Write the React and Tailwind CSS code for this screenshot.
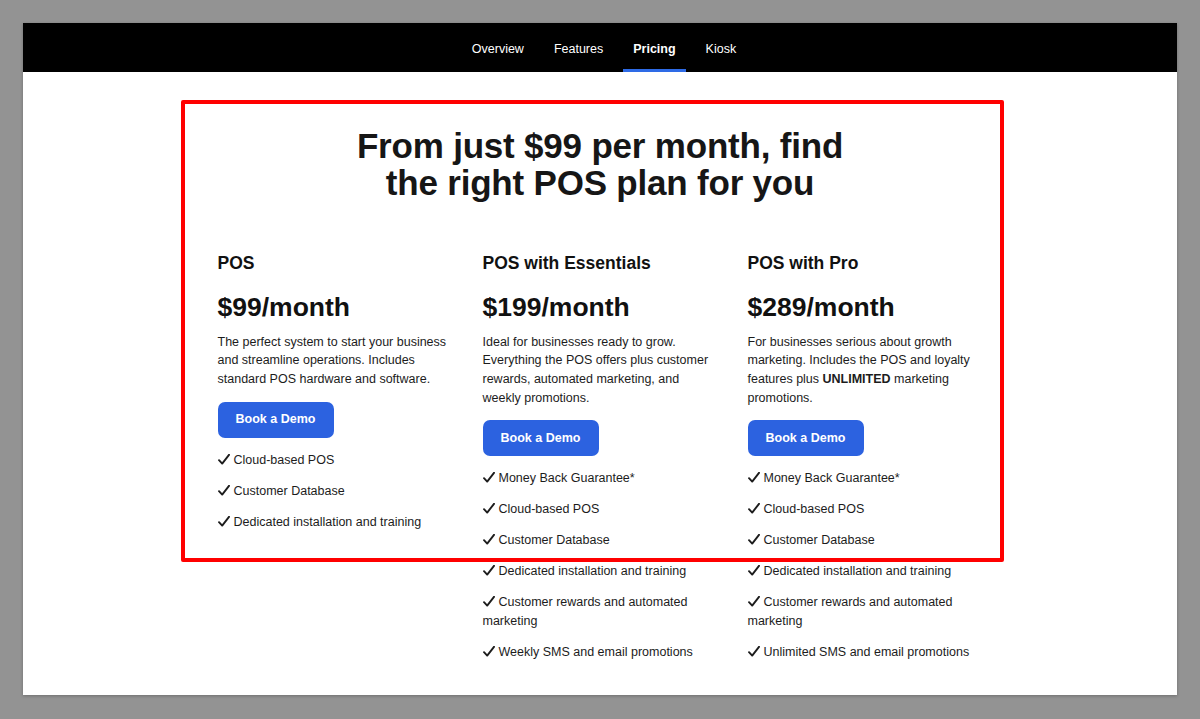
const navItems = [
  { label: "Overview" },
  { label: "Features" },
  { label: "Pricing", active: true },
  { label: "Kiosk" },
];

const plans = [
  {
    name: "POS",
    price: "$99/month",
    description: (
      <>
        The perfect system to start your business and streamline operations.
        Includes standard POS hardware and software.
      </>
    ),
    features: [
      "Cloud-based POS",
      "Customer Database",
      "Dedicated installation and training",
    ],
  },
  {
    name: "POS with Essentials",
    price: "$199/month",
    description: (
      <>
        Ideal for businesses ready to grow. Everything the POS offers plus
        customer rewards, automated marketing, and weekly promotions.
      </>
    ),
    features: [
      "Money Back Guarantee*",
      "Cloud-based POS",
      "Customer Database",
      "Dedicated installation and training",
      "Customer rewards and automated marketing",
      "Weekly SMS and email promotions",
    ],
  },
  {
    name: "POS with Pro",
    price: "$289/month",
    description: (
      <>
        For businesses serious about growth marketing. Includes the POS and
        loyalty features plus <strong className="font-bold">UNLIMITED</strong>{" "}
        marketing promotions.
      </>
    ),
    features: [
      "Money Back Guarantee*",
      "Cloud-based POS",
      "Customer Database",
      "Dedicated installation and training",
      "Customer rewards and automated marketing",
      "Unlimited SMS and email promotions",
    ],
  },
];

const PlanColumn = ({ plan }) => {
  return (
    <div className="flex flex-col">
      <h3 className="text-[17.5px] leading-[22px] font-bold text-[#111]">
        {plan.name}
      </h3>
      <div className="mt-[16.5px] text-[26.5px] leading-[32px] font-bold text-[#111]">
        {plan.price}
      </div>
      <p className="mt-[10px] text-[12.5px] leading-[18.7px] text-[#1c1c1c]">
        {plan.description}
      </p>
      <button className="mt-[13px] w-[116px] h-[36px] rounded-[7px] bg-[#2c62e0] text-white text-[12.5px] font-bold">
        Book a Demo
      </button>
      <ul className="mt-[13px] flex flex-col gap-[12px]">
        {plan.features.map((feature) => (
          <li
            key={feature}
            className="text-[12.5px] leading-[19px] text-[#1c1c1c]"
          >
            <svg
              className="inline-block align-[-1px] mr-[4px]"
              width="12"
              height="11"
              viewBox="0 0 12 11"
              fill="none"
            >
              <path
                d="M1 6.2 L4.2 9.6 L11 0.8"
                stroke="#1c1c1c"
                strokeWidth="1.9"
                strokeLinecap="round"
                strokeLinejoin="round"
              />
            </svg>
            {feature}
          </li>
        ))}
      </ul>
    </div>
  );
};

export default function App() {
  return (
    <div
      className="min-h-screen bg-[#939393] p-[23px]"
      style={{ fontFamily: '"Liberation Sans", Arial, sans-serif' }}
    >
      <div className="relative w-[1154px] h-[672px] bg-white shadow-[0_1px_3px_rgba(0,0,0,0.25)]">
        <nav className="h-[49px] bg-black flex justify-center gap-[10px] pl-[8px]">
          {navItems.map((item) => (
            <a
              key={item.label}
              className={`flex items-center px-[10px] pt-[6px] text-[12.5px] text-white border-b-[3px] ${
                item.active
                  ? "font-bold border-[#2e6be6]"
                  : "border-transparent"
              }`}
            >
              {item.label}
            </a>
          ))}
        </nav>

        <section className="pt-[55px] flex flex-col items-center">
          <h1 className="text-center text-[35px] leading-[37px] font-bold text-[#161616] tracking-[-0.2px]">
            From just $99 per month, find
            <br />
            the right POS plan for you
          </h1>
          <div className="mt-[51px] grid grid-cols-[235px_235px_235px] gap-[30px]">
            {plans.map((plan) => (
              <PlanColumn key={plan.name} plan={plan} />
            ))}
          </div>
        </section>

        {/* highlight annotation */}
        <div className="absolute left-[158px] top-[77px] w-[823px] h-[462px] border-4 border-[#ff0000] rounded-[2px] pointer-events-none"></div>
      </div>
    </div>
  );
}
